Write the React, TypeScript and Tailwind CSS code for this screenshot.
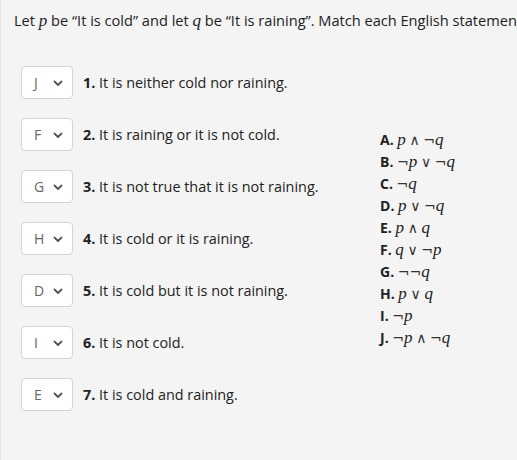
import React from 'react';

const rows = [
  { value: 'J', text: 'It is neither cold nor raining.' },
  { value: 'F', text: 'It is raining or it is not cold.' },
  { value: 'G', text: 'It is not true that it is not raining.' },
  { value: 'H', text: 'It is cold or it is raining.' },
  { value: 'D', text: 'It is cold but it is not raining.' },
  { value: 'I', text: 'It is not cold.' },
  { value: 'E', text: 'It is cold and raining.' },
];

const V = ({ children }: { children: React.ReactNode }) => (
  <span className="italic font-['Liberation_Serif',serif] text-[17px] leading-none">{children}</span>
);
const Op = ({ children }: { children: React.ReactNode }) => (
  <span className="font-['DejaVu_Serif',serif] text-[14px] leading-none text-[#333]">{children}</span>
);

const options: { key: string; expr: React.ReactNode }[] = [
  { key: 'A', expr: <><V>p</V> <Op>∧</Op> <Op>¬</Op><V>q</V></> },
  { key: 'B', expr: <><Op>¬</Op><V>p</V> <Op>∨</Op> <Op>¬</Op><V>q</V></> },
  { key: 'C', expr: <><Op>¬</Op><V>q</V></> },
  { key: 'D', expr: <><V>p</V> <Op>∨</Op> <Op>¬</Op><V>q</V></> },
  { key: 'E', expr: <><V>p</V> <Op>∧</Op> <V>q</V></> },
  { key: 'F', expr: <><V>q</V> <Op>∨</Op> <Op>¬</Op><V>p</V></> },
  { key: 'G', expr: <><Op>¬¬</Op><V>q</V></> },
  { key: 'H', expr: <><V>p</V> <Op>∨</Op> <V>q</V></> },
  { key: 'I', expr: <><Op>¬</Op><V>p</V></> },
  { key: 'J', expr: <><Op>¬</Op><V>p</V> <Op>∧</Op> <Op>¬</Op><V>q</V></> },
];

const Chevron = () => (
  <svg width="10" height="10" viewBox="0 0 10 10" className="text-[#555]">
    <path d="M1.5 3.5 L5 7 L8.5 3.5" fill="none" stroke="currentColor" strokeWidth="1.8" strokeLinecap="round" strokeLinejoin="round" />
  </svg>
);

export default function App() {
  return (
    <div className="w-[517px] h-[460px] overflow-hidden bg-[#f4f4f4] border-l border-[#e2e2e2] font-['Open_Sans',sans-serif] text-[#222]">
      <p className="pl-[13px] pt-[9px] text-[14.6px] leading-[22px] whitespace-nowrap">
        Let <V>p</V> be “It is cold” and let <V>q</V> be “It is raining”. Match each English statement with its logical form.
      </p>
      <div className="flex pt-[35px]">
        <div className="flex flex-col gap-[19px] pl-[20px] w-[379px]">
          {rows.map((r, i) => (
            <div key={i} className="flex items-center h-[33px]">
              <div className="flex items-center justify-between w-[52px] h-[33px] bg-white border border-[#d4d4d4] rounded-[4px] pl-[12px] pr-[9px]">
                <span className="text-[14px] text-[#666]">{r.value}</span>
                <Chevron />
              </div>
              <span className="ml-[10px] text-[14.4px]">
                <span className="font-bold">{i + 1}.</span> {r.text}
              </span>
            </div>
          ))}
        </div>
        <div className="flex flex-col pt-[63px] text-[14px]">
          {options.map((o) => (
            <div key={o.key} className="h-[22px] leading-[22px] whitespace-nowrap">
              <span className="font-bold">{o.key}.</span> {o.expr}
            </div>
          ))}
        </div>
      </div>
    </div>
  );
}
